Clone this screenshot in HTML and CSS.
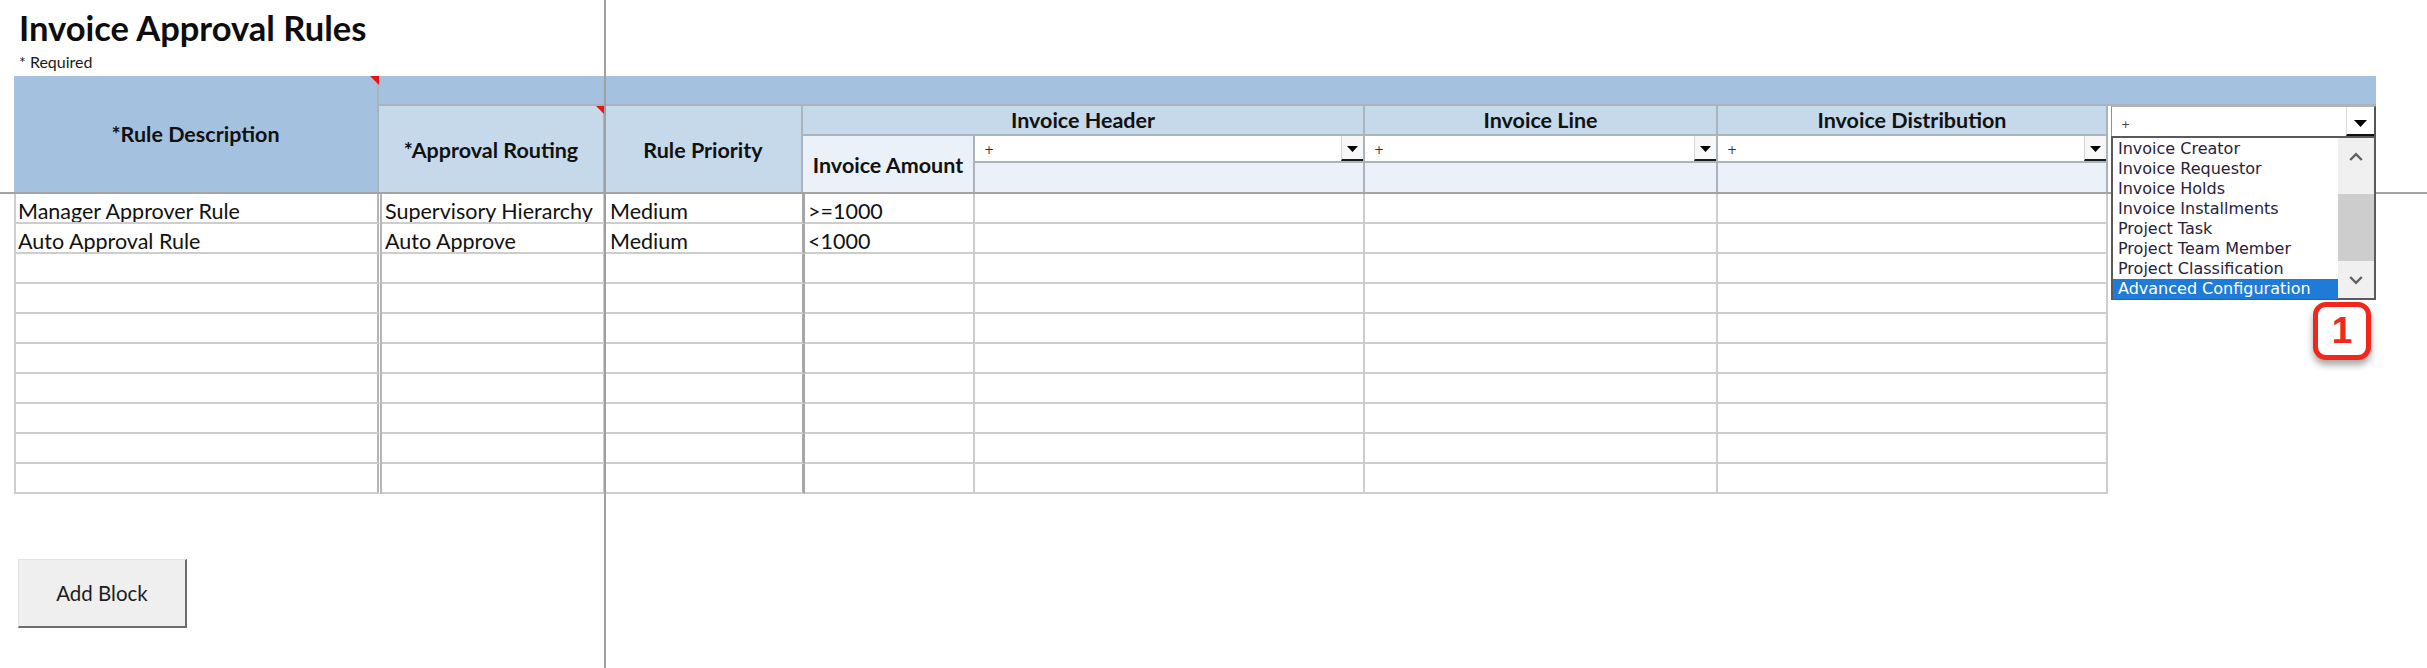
FILE: index.html
```html
<!DOCTYPE html>
<html lang="en">
<head>
<meta charset="utf-8">
<title>Invoice Approval Rules</title>
<link rel="stylesheet" href="styles.css">
</head>
<body>
<div class="sheet">
  <div class="freeze-v"></div>
  <div class="freeze-h"></div>

  <header class="head">
    <h1 class="title">Invoice Approval Rules</h1>
    <div class="req">* Required</div>
  </header>

  <div class="hgrid">
    <div class="hc dark c-desc has-note">*Rule Description</div>
    <div class="hc dark c-band"></div>
    <div class="hc light c-route has-note">*Approval Routing</div>
    <div class="hc light c-prio">Rule Priority</div>
    <div class="hc light c-ghead">Invoice Header</div>
    <div class="hc light c-gline">Invoice Line</div>
    <div class="hc light c-gdist">Invoice Distribution</div>
    <div class="c-blank"></div>
    <div class="hc pale c-amount">Invoice Amount</div>
    <div class="combo c-k5"><span class="plus">+</span><span class="arrow"><svg width="11" height="6" viewBox="0 0 11 6"><path d="M0 0H11L5.5 6Z" fill="#000"/></svg></span></div>
    <div class="combo c-k6"><span class="plus">+</span><span class="arrow"><svg width="11" height="6" viewBox="0 0 11 6"><path d="M0 0H11L5.5 6Z" fill="#000"/></svg></span></div>
    <div class="combo c-k7"><span class="plus">+</span><span class="arrow"><svg width="11" height="6" viewBox="0 0 11 6"><path d="M0 0H11L5.5 6Z" fill="#000"/></svg></span></div>
    <div class="hc pale c-p5"></div>
    <div class="hc pale c-p6"></div>
    <div class="hc pale c-p7"></div>
  </div>

  <div class="bgrid">
    <div class="cell">Manager Approver Rule</div><div class="cell">Supervisory Hierarchy</div><div class="cell">Medium</div><div class="cell">&gt;=1000</div><div class="cell"></div><div class="cell"></div><div class="cell"></div>
    <div class="cell">Auto Approval Rule</div><div class="cell">Auto Approve</div><div class="cell">Medium</div><div class="cell">&lt;1000</div><div class="cell"></div><div class="cell"></div><div class="cell"></div>
    <div class="cell"></div><div class="cell"></div><div class="cell"></div><div class="cell"></div><div class="cell"></div><div class="cell"></div><div class="cell"></div>
    <div class="cell"></div><div class="cell"></div><div class="cell"></div><div class="cell"></div><div class="cell"></div><div class="cell"></div><div class="cell"></div>
    <div class="cell"></div><div class="cell"></div><div class="cell"></div><div class="cell"></div><div class="cell"></div><div class="cell"></div><div class="cell"></div>
    <div class="cell"></div><div class="cell"></div><div class="cell"></div><div class="cell"></div><div class="cell"></div><div class="cell"></div><div class="cell"></div>
    <div class="cell"></div><div class="cell"></div><div class="cell"></div><div class="cell"></div><div class="cell"></div><div class="cell"></div><div class="cell"></div>
    <div class="cell"></div><div class="cell"></div><div class="cell"></div><div class="cell"></div><div class="cell"></div><div class="cell"></div><div class="cell"></div>
    <div class="cell"></div><div class="cell"></div><div class="cell"></div><div class="cell"></div><div class="cell"></div><div class="cell"></div><div class="cell"></div>
    <div class="cell"></div><div class="cell"></div><div class="cell"></div><div class="cell"></div><div class="cell"></div><div class="cell"></div><div class="cell"></div>
  </div>

  <button class="add-btn" type="button">Add Block</button>

  <div class="dd">
    <div class="dd-field">
      <span class="dd-plus">+</span>
      <span class="dd-btn"><svg width="13" height="7" viewBox="0 0 13 7"><path d="M0 0H13L6.5 7Z" fill="#000"/></svg></span>
    </div>
    <div class="dd-list">
      <ul class="dd-items">
        <li>Invoice Creator</li>
        <li>Invoice Requestor</li>
        <li>Invoice Holds</li>
        <li>Invoice Installments</li>
        <li>Project Task</li>
        <li>Project Team Member</li>
        <li>Project Classification</li>
        <li class="sel">Advanced Configuration</li>
      </ul>
      <div class="sb">
        <div class="sb-btn"><svg width="14" height="9" viewBox="0 0 14 9"><path d="M1.2 8L7 2.2L12.8 8" fill="none" stroke="#606060" stroke-width="2.4"/></svg></div>
        <div class="sb-track"><div class="sb-thumb"></div></div>
        <div class="sb-btn"><svg width="14" height="9" viewBox="0 0 14 9"><path d="M1.2 1L7 6.8L12.8 1" fill="none" stroke="#606060" stroke-width="2.4"/></svg></div>
      </div>
    </div>
  </div>

  <div class="badge">1</div>
</div>
</body>
</html>
```

FILE: styles.css
```css
* { box-sizing: border-box; }

body {
  margin: 0;
  background: #ffffff;
  font-family: Lato, "Liberation Sans", sans-serif;
  color: #111111;
}

.sheet {
  position: relative;
  width: 2427px;
  height: 668px;
  overflow: hidden;
}

/* freeze pane lines */
.freeze-v {
  position: absolute;
  left: 604px;
  top: 0;
  width: 2px;
  height: 668px;
  background: #9f9f9f;
  z-index: 2;
}
.freeze-h {
  position: absolute;
  left: 0;
  top: 192px;
  width: 2427px;
  height: 2px;
  background: #a3a3a3;
  z-index: 2;
}

/* title block */
.head {
  height: 76px;
  padding: 7px 0 0 19px;
}
.title {
  margin: 0;
  font-size: 34.5px;
  line-height: 42px;
  font-weight: 700;
  color: #0d0d0d;
}
.req {
  margin-top: 3px;
  font-size: 16px;
  line-height: 20px;
  color: #1a1a1a;
}

/* header grid */
.hgrid {
  display: grid;
  margin-left: 14px;
  grid-template-columns: 365px 226px 198px 172px 390px 353px 390px 268px;
  grid-template-rows: 30px 30px 27px 31px;
}
.hc {
  position: relative;
  display: flex;
  align-items: center;
  justify-content: center;
  text-align: center;
  font-weight: 700;
  font-size: 21.5px;
  color: #111111;
  white-space: nowrap;
  border-right: 2px solid #aab4be;
  border-bottom: 2px solid #aab4be;
}
.dark { background: #a4c2df; }
.light { background: #c5d9eb; }
.pale { background: #eaf1f8; }

.c-desc { grid-column: 1; grid-row: 1 / span 4; }
.c-band { grid-column: 2 / span 7; grid-row: 1; border-right: none; }
.c-route { grid-column: 2; grid-row: 2 / span 3; padding-top: 2px; }
.c-prio { grid-column: 3; grid-row: 2 / span 3; padding-top: 2px; }
.c-ghead { grid-column: 4 / span 2; grid-row: 2; }
.c-gline { grid-column: 6; grid-row: 2; }
.c-gdist { grid-column: 7; grid-row: 2; }
.c-blank { grid-column: 8; grid-row: 2 / span 3; background: #ffffff; }
.c-amount { grid-column: 4; grid-row: 3 / span 2; padding-top: 2px; }
.c-k5 { grid-column: 5; grid-row: 3; }
.c-k6 { grid-column: 6; grid-row: 3; }
.c-k7 { grid-column: 7; grid-row: 3; }
.c-p5 { grid-column: 5; grid-row: 4; }
.c-p6 { grid-column: 6; grid-row: 4; }
.c-p7 { grid-column: 7; grid-row: 4; }

.has-note::after {
  content: "";
  position: absolute;
  top: 0;
  right: -2px;
  width: 0;
  height: 0;
  border-top: 9px solid #ee1111;
  border-left: 9px solid transparent;
}

/* in-cell combo boxes */
.combo {
  display: flex;
  align-items: center;
  background: #ffffff;
  border-right: 2px solid #aab4be;
  border-bottom: 2px solid #aab4be;
  padding-left: 9px;
}
.plus {
  font-family: "DejaVu Sans", sans-serif;
  font-size: 12px;
  line-height: 12px;
  color: #333333;
  margin-top: 3px;
}
.arrow {
  margin-left: auto;
  width: 22px;
  align-self: stretch;
  display: flex;
  align-items: center;
  justify-content: center;
  padding-top: 3px;
  background: #f7f7f7;
  border-left: 1px solid #d6d6d6;
  border-bottom: 2px solid #1a1a1a;
}
.arrow svg, .dd-btn svg, .sb-btn svg { display: block; }

/* body grid */
.bgrid {
  display: grid;
  margin-left: 14px;
  grid-template-columns: 368px 223px 200px 170px 390px 353px 390px;
  grid-template-rows: repeat(10, 30px);
}
.cell {
  display: flex;
  align-items: flex-end;
  padding-left: 3px;
  font-size: 21.5px;
  line-height: 22px;
  color: #111111;
  white-space: nowrap;
  overflow: hidden;
  border-right: 2px solid #cdcdcd;
  border-bottom: 2px solid #cdcdcd;
}
.bgrid > .cell:nth-child(7n+1) {
  padding-left: 2px;
  border-left: 2px solid #cdcdcd;
  border-right: 5px double #b5b5b5;
}
.bgrid > .cell:nth-child(7n+3) {
  padding-left: 5px;
  border-right: 3px solid #a6a6a6;
}

/* button */
.add-btn {
  display: flex;
  align-items: center;
  justify-content: center;
  margin: 65px 0 0 18px;
  width: 169px;
  height: 69px;
  padding: 0;
  font-family: Lato, "Liberation Sans", sans-serif;
  font-size: 20.5px;
  color: #1d1d1d;
  background: #efefef;
  border-top: 1px solid #e2e2e2;
  border-left: 1px solid #e2e2e2;
  border-right: 2px solid #6c6c6c;
  border-bottom: 2px solid #6c6c6c;
  border-radius: 0;
}

/* open dropdown overlay */
.dd {
  position: absolute;
  left: 2111px;
  top: 106px;
  width: 265px;
  z-index: 5;
}
.dd-field {
  display: flex;
  align-items: center;
  height: 30px;
  background: #ffffff;
  border-top: 1px solid #b3b3b3;
  border-left: 1px solid #8f8f8f;
  border-right: 2px solid #555555;
}
.dd-plus {
  font-family: "DejaVu Sans", sans-serif;
  font-size: 11px;
  line-height: 11px;
  color: #444444;
  margin: 6px 0 0 9px;
}
.dd-btn {
  margin-left: auto;
  width: 28px;
  align-self: stretch;
  display: flex;
  align-items: center;
  justify-content: center;
  padding-top: 5px;
  border-left: 1px solid #dddddd;
  border-bottom: 2px solid #111111;
}
.dd-list {
  display: flex;
  height: 164px;
  background: #ffffff;
  border: 2px solid #5a5a5a;
}
.dd-items {
  flex: 1;
  list-style: none;
  margin: 0;
  padding: 1px 0 0;
}
.dd-items li {
  height: 20px;
  padding-left: 5px;
  font-family: "DejaVu Sans", sans-serif;
  font-size: 16px;
  line-height: 20px;
  color: #28223a;
  white-space: nowrap;
}
.dd-items li.sel {
  background: #1f7bd8;
  color: #ffffff;
}
.sb {
  width: 36px;
  display: flex;
  flex-direction: column;
  background: #f0f0f0;
}
.sb-btn {
  height: 36px;
  display: flex;
  align-items: center;
  justify-content: center;
}
.sb-track {
  flex: 1;
  padding-top: 20px;
}
.sb-thumb {
  height: 67px;
  background: #cdcdcd;
}

/* callout badge */
.badge {
  position: absolute;
  left: 2313px;
  top: 302px;
  width: 58px;
  height: 58px;
  border: 5px solid #f2271c;
  border-radius: 13px;
  background: #ffffff;
  box-shadow: 0 5px 7px rgba(0, 0, 0, 0.35);
  color: #f2271c;
  font-family: "Liberation Sans", Arial, sans-serif;
  font-weight: 700;
  font-size: 37px;
  line-height: 48px;
  text-align: center;
  z-index: 6;
}
```
